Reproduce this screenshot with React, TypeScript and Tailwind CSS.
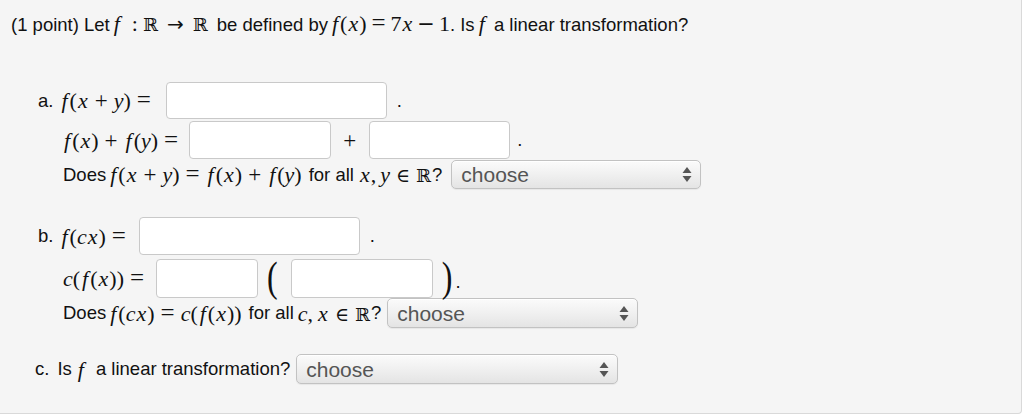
import React from "react";

const serif = "font-['Liberation_Serif','DejaVu_Serif',serif]";

function F() {
  return <span className={`${serif} italic px-[2px]`}>f</span>;
}
function X() {
  return <span className={`${serif} italic px-[1px]`}>x</span>;
}
function Y() {
  return <span className={`${serif} italic`}>y</span>;
}
function C() {
  return <span className={`${serif} italic`}>c</span>;
}
function P({ c }: { c: string }) {
  return <span className={serif}>{c}</span>;
}
function R() {
  return <span className="font-['DejaVu_Serif',serif] text-[18px]">ℝ</span>;
}
function M({ children, className = "" }: { children: React.ReactNode; className?: string }) {
  return <span className={`${serif} text-[22px] whitespace-nowrap ${className}`}>{children}</span>;
}
function Eq({ className = "mx-[6px]" }: { className?: string }) {
  return <span className={`${serif} text-[25px] leading-none ${className}`}>=</span>;
}
function Pl({ className = "mx-[6px]" }: { className?: string }) {
  return <span className={`${serif} text-[23px] leading-none ${className}`}>+</span>;
}
function In() {
  return <span className="font-['DejaVu_Serif',serif] text-[19px] mx-[6px]">∈</span>;
}
function BigParen({ c, className }: { c: string; className: string }) {
  return (
    <span className={`${serif} text-[32px] leading-none inline-block scale-y-[1.3] ${className}`}>{c}</span>
  );
}

function Box({ w, h }: { w: string; h: string }) {
  return <div className={`${w} ${h} shrink-0 rounded-[4px] border border-[#c9c9c9] bg-white`} />;
}

function Sel({ w, h }: { w: string; h: string }) {
  return (
    <div
      className={`${w} ${h} shrink-0 flex items-center justify-between rounded-[5px] border border-[#c2c2c2] bg-linear-to-b from-[#fbfbfb] via-[#f0f0f0] to-[#e4e4e4] pl-[9px] pr-[8px] shadow-[inset_0_1px_0_#ffffff,0_1px_1px_rgba(0,0,0,0.06)]`}
    >
      <span className="font-['Liberation_Sans',Arial,sans-serif] text-[21px] text-[#555] leading-none">choose</span>
      <svg width="10" height="17" viewBox="0 0 10 17">
        <path d="M5 1 L9.5 7 L0.5 7 Z" fill="#555" />
        <path d="M5 16 L9.5 10 L0.5 10 Z" fill="#555" />
      </svg>
    </div>
  );
}

export default function App() {
  return (
    <div className="w-[1024px] h-[417px] bg-white">
      <div className="w-[1022px] h-[414px] bg-[#f5f5f5] border-r border-b border-[#d9d9d9] rounded-br-[4px] font-['Liberation_Sans',Arial,sans-serif] text-[18.5px] text-[#111] flex flex-col">
        {/* Title */}
        <div className="pl-[11px] pt-[10px] h-[35px] leading-[24px] whitespace-nowrap">
          <span>(1 point) Let</span>
          <M className="ml-[2px]">
            <F />
            <span className="ml-[10px] mr-[5px]">:</span>
            <R />
            <span className="font-['DejaVu_Sans',sans-serif] text-[20px] mx-[9px]">→</span>
            <R />
          </M>
          <span className="ml-[4px]"> be defined by</span>
          <M className="ml-[2px]">
            <F />
            <P c="(" />
            <X />
            <P c=")" />
            <Eq className="ml-[5px] mr-[5px]" />
            <P c="7" />
            <X />
            <span className="font-['DejaVu_Sans',sans-serif] text-[21px] mx-[4px]">−</span>
            <P c="1" />
          </M>
          <span>. Is</span>
          <M className="ml-[2px]">
            <F />
          </M>
          <span className="ml-[2px]"> a linear transformation?</span>
        </div>

        {/* a. row 1 */}
        <div className="flex items-center h-[37px] mt-[47px] pl-[38px] whitespace-nowrap">
          <span>a.</span>
          <M className="ml-[6px]">
            <F />
            <P c="(" />
            <X />
            <Pl />
            <Y />
            <P c=")" />
            <Eq />
          </M>
          <div className="ml-[9px]">
            <Box w="w-[221px]" h="h-[37px]" />
          </div>
          <span className="ml-[10px]">.</span>
        </div>

        {/* a. row 2 */}
        <div className="flex items-center h-[38px] mt-[2px] pl-[62px] whitespace-nowrap">
          <M>
            <F />
            <P c="(" />
            <X />
            <P c=")" />
            <Pl />
            <F />
            <P c="(" />
            <Y />
            <P c=")" />
            <Eq />
          </M>
          <div className="ml-[5px]">
            <Box w="w-[142px]" h="h-[38px]" />
          </div>
          <Pl className="ml-[12px]" />
          <div className="ml-[13px]">
            <Box w="w-[141px]" h="h-[38px]" />
          </div>
          <span className="ml-[7px]">.</span>
        </div>

        {/* a. row 3 */}
        <div className="flex items-center h-[29px] mt-[1px] pl-[63px] whitespace-nowrap">
          <span>Does</span>
          <M className="ml-[2px]">
            <F />
            <P c="(" />
            <X />
            <Pl />
            <Y />
            <P c=")" />
            <Eq />
            <F />
            <P c="(" />
            <X />
            <P c=")" />
            <Pl />
            <F />
            <P c="(" />
            <Y />
            <P c=")" />
          </M>
          <span className="ml-[7px]">for all</span>
          <M className="ml-[5px]">
            <X />
            <P c="," />
            <span className="ml-[4px]">
              <Y />
            </span>
            <In />
            <R />
          </M>
          <span className="ml-[1px]">?</span>
          <div className="ml-[9px]">
            <Sel w="w-[250px]" h="h-[29px]" />
          </div>
        </div>

        {/* b. row 1 */}
        <div className="flex items-center h-[38px] mt-[28px] pl-[38px] whitespace-nowrap">
          <span>b.</span>
          <M className="ml-[6px]">
            <F />
            <P c="(" />
            <C />
            <X />
            <P c=")" />
            <Eq />
          </M>
          <div className="ml-[7px]">
            <Box w="w-[221px]" h="h-[38px]" />
          </div>
          <span className="ml-[10px]">.</span>
        </div>

        {/* b. row 2 */}
        <div className="flex items-center h-[39px] mt-[4px] pl-[63px] whitespace-nowrap">
          <M>
            <C />
            <P c="(" />
            <F />
            <P c="(" />
            <X />
            <P c="))" />
            <Eq />
          </M>
          <div className="ml-[6px]">
            <Box w="w-[102px]" h="h-[39px]" />
          </div>
          <BigParen c="(" className="ml-[9px] mb-[3px]" />
          <div className="ml-[13px]">
            <Box w="w-[142px]" h="h-[39px]" />
          </div>
          <BigParen c=")" className="ml-[9px] mb-[3px]" />
          <span className="ml-[3px] mt-[6px]">.</span>
        </div>

        {/* b. row 3 */}
        <div className="flex items-center h-[30px] pl-[63px] whitespace-nowrap">
          <span>Does</span>
          <M className="ml-[2px]">
            <F />
            <P c="(" />
            <C />
            <X />
            <P c=")" />
            <Eq />
            <C />
            <P c="(" />
            <F />
            <P c="(" />
            <X />
            <P c="))" />
          </M>
          <span className="ml-[7px]">for all</span>
          <M className="ml-[4px]">
            <C />
            <P c="," />
            <span className="ml-[4px]">
              <X />
            </span>
            <In />
            <R />
          </M>
          <span className="ml-[1px]">?</span>
          <div className="ml-[6px]">
            <Sel w="w-[251px]" h="h-[30px]" />
          </div>
        </div>

        {/* c. row */}
        <div className="flex items-center h-[30px] mt-[26px] pl-[35px] whitespace-nowrap">
          <span>c.</span>
          <span className="ml-[8px]">Is</span>
          <M className="ml-[4px]">
            <F />
          </M>
          <span className="ml-[10px]">a linear transformation?</span>
          <div className="ml-[6px]">
            <Sel w="w-[322px]" h="h-[30px]" />
          </div>
        </div>
      </div>
    </div>
  );
}
